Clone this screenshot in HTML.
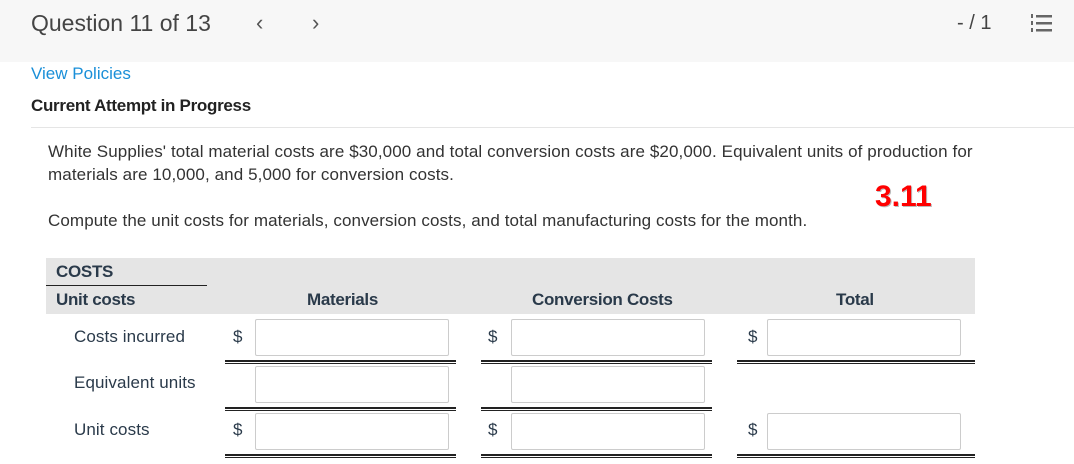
<!DOCTYPE html><html><head><style>
*{margin:0;padding:0;box-sizing:border-box}
body{width:1074px;height:464px;background:#fff;font-family:"Liberation Sans",sans-serif;color:#333;position:relative;overflow:hidden}
.a{position:absolute;white-space:nowrap}
.top{left:0;top:0;width:1074px;height:62px;background:#f7f7f7}
.in{position:absolute;width:194px;height:37px;border:1px solid #ccc;border-radius:2px;background:#fff}
.dl{position:absolute;height:4px;border-top:2px solid #222;border-bottom:1px solid #222}
.d{position:absolute;font-size:17px;color:#2a3a4a}
.t{font-size:17px;letter-spacing:0.1px}
</style></head><body>
<div class="a top"></div>
<div class="a" style="left:31px;top:10px;font-size:23px;color:#444">Question 11 of 13</div>
<div class="a" style="left:256px;top:10px;font-size:22px;color:#555">&lsaquo;</div>
<div class="a" style="left:312px;top:10px;font-size:22px;color:#555">&rsaquo;</div>
<div class="a" style="left:957px;top:12px;font-size:20px;color:#444">- / 1</div>
<svg class="a" style="left:1030px;top:13px" width="24" height="20"><g fill="#666"><rect x="6" y="2" width="16" height="2.5"/><rect x="6" y="9" width="16" height="2.5"/><rect x="6" y="16" width="16" height="2.5"/><rect x="1" y="1" width="2" height="4"/><rect x="1" y="8" width="2" height="4"/><rect x="1" y="15" width="2" height="4"/></g></svg>
<div class="a" style="left:31px;top:64px;font-size:17px;color:#1a8fd8">View Policies</div>
<div class="a" style="left:31px;top:96px;font-size:17px;font-weight:bold;color:#222;letter-spacing:-0.3px">Current Attempt in Progress</div>
<div class="a" style="left:31px;top:127px;width:1043px;height:1px;background:#e5e5e5"></div>
<div class="a t" style="left:48px;top:140px;line-height:23px;color:#333">White Supplies' total material costs are $30,000 and total conversion costs are $20,000. Equivalent units of production for<br>materials are 10,000, and 5,000 for conversion costs.</div>
<div class="a" style="left:875px;top:180px;font-size:30px;font-weight:bold;color:#f00;text-shadow:1px 1px 0 #bbb">3.11</div>
<div class="a t" style="left:48px;top:211px;color:#333">Compute the unit costs for materials, conversion costs, and total manufacturing costs for the month.</div>
<div class="a" style="left:46px;top:258px;width:929px;height:56px;background:#e5e5e5"></div>
<div class="a t" style="left:56px;top:262px;font-weight:bold;color:#2a3a4a;letter-spacing:-0.3px">COSTS</div>
<div class="a" style="left:46px;top:285px;width:161px;height:1px;background:#222"></div>
<div class="a t" style="left:56px;top:290px;font-weight:bold;color:#2a3a4a;letter-spacing:-0.3px">Unit costs</div>
<div class="a t" style="left:307px;top:290px;font-weight:bold;color:#2a3a4a;letter-spacing:-0.3px">Materials</div>
<div class="a t" style="left:532px;top:290px;font-weight:bold;color:#2a3a4a;letter-spacing:-0.3px">Conversion Costs</div>
<div class="a t" style="left:836px;top:290px;font-weight:bold;color:#2a3a4a;letter-spacing:-0.3px">Total</div>
<div class="a t" style="left:74px;top:327px;color:#2a3a4a">Costs incurred</div>
<div class="a t" style="left:74px;top:373px;color:#2a3a4a">Equivalent units</div>
<div class="a t" style="left:74px;top:420px;color:#2a3a4a">Unit costs</div>
<span class="d" style="left:233px;top:327px">$</span><span class="d" style="left:488px;top:327px">$</span><span class="d" style="left:748px;top:327px">$</span>
<span class="d" style="left:233px;top:420px">$</span><span class="d" style="left:488px;top:420px">$</span><span class="d" style="left:748px;top:420px">$</span>
<div class="in" style="left:255px;top:319px"></div><div class="in" style="left:511px;top:319px"></div><div class="in" style="left:767px;top:319px"></div>
<div class="in" style="left:255px;top:366px"></div><div class="in" style="left:511px;top:366px"></div>
<div class="in" style="left:255px;top:413px"></div><div class="in" style="left:511px;top:413px"></div><div class="in" style="left:767px;top:413px"></div>
<div class="dl" style="left:225px;top:360px;width:231px"></div><div class="dl" style="left:481px;top:360px;width:231px"></div><div class="dl" style="left:737px;top:360px;width:238px"></div>
<div class="dl" style="left:225px;top:407px;width:231px"></div><div class="dl" style="left:481px;top:407px;width:231px"></div>
<div class="dl" style="left:225px;top:454px;width:231px"></div><div class="dl" style="left:481px;top:454px;width:231px"></div><div class="dl" style="left:737px;top:454px;width:238px"></div>
</body></html>
